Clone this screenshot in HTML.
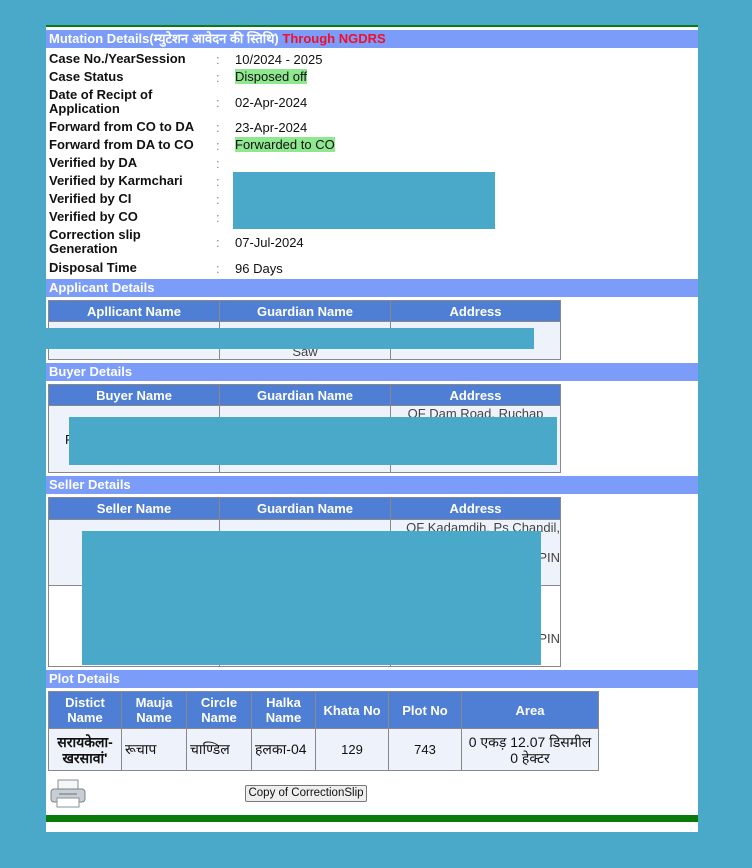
<!DOCTYPE html>
<html><head><meta charset="utf-8"><style>
body{margin:0;width:752px;height:868px;background:#4aa9c8;position:relative;overflow:hidden;font-family:"Liberation Sans","Noto Sans CJK SC",sans-serif;font-size:13px;color:#111}
.a{position:absolute}
.panel{left:46px;top:25px;width:652px;height:807px;background:#fff;border-top:2px solid #0a7a1a;box-sizing:border-box}
.hd{left:46px;width:652px;height:18px;background:#7b9cf9;color:#fff;font-weight:bold;font-size:13px;line-height:18px;padding-left:3px;box-sizing:border-box}
.lb{left:49px;font-weight:bold;font-size:13px;line-height:14px}
.co{left:216px;color:#888}
.va{left:235px;font-size:13px}
.gr{background:#8fe88f}
table{position:absolute;border-collapse:collapse;font-size:13px}
th{background:#4f7fd4;color:#fff;font-weight:bold;border:1px solid #888;text-align:center;padding:0}
td{border:1px solid #888;text-align:center;padding:0;background:#eef2fb}
.red{position:absolute;background:#4aa9c8}
.dv{font-size:14px}
</style></head><body>
<div class="a panel"></div>
<div class="a hd" style="top:30px">Mutation Details(म्युटेशन आवेदन की स्तिथि) <span style="color:#f0102a">Through NGDRS</span></div>
<div class="a lb" style="top:52px">Case No./YearSession</div><div class="a co" style="top:52px">:</div><div class="a va" style="top:52px">10/2024 - 2025</div>
<div class="a lb" style="top:70px">Case Status</div><div class="a co" style="top:70px">:</div><div class="a va gr" style="top:69px">Disposed off</div>
<div class="a lb" style="top:88px">Date of Recipt of<br>Application</div><div class="a co" style="top:95px">:</div><div class="a va" style="top:95px">02-Apr-2024</div>
<div class="a lb" style="top:120px">Forward from CO to DA</div><div class="a co" style="top:120px">:</div><div class="a va" style="top:120px">23-Apr-2024</div>
<div class="a lb" style="top:138px">Forward from DA to CO</div><div class="a co" style="top:138px">:</div><div class="a va gr" style="top:137px">Forwarded to CO</div>
<div class="a lb" style="top:156px">Verified by DA</div><div class="a co" style="top:156px">:</div>
<div class="a lb" style="top:174px">Verified by Karmchari</div><div class="a co" style="top:174px">:</div>
<div class="a lb" style="top:192px">Verified by CI</div><div class="a co" style="top:192px">:</div>
<div class="a lb" style="top:210px">Verified by CO</div><div class="a co" style="top:210px">:</div>
<div class="red" style="left:233px;top:172px;width:262px;height:57px"></div>
<div class="a lb" style="top:228px">Correction slip<br>Generation</div><div class="a co" style="top:235px">:</div><div class="a va" style="top:235px">07-Jul-2024</div>
<div class="a lb" style="top:261px">Disposal Time</div><div class="a co" style="top:261px">:</div><div class="a va" style="top:261px">96 Days</div>

<div class="a hd" style="top:279px">Applicant Details</div>
<table style="left:48px;top:300px;width:513px"><tr style="height:21px"><th style="width:170px">Apllicant Name</th><th style="width:170px">Guardian Name</th><th>Address</th></tr><tr style="height:38px"><td></td><td style="vertical-align:bottom;color:#444">Saw</td><td></td></tr></table>
<div class="red" style="left:46px;top:328px;width:488px;height:21px"></div>

<div class="a hd" style="top:363px">Buyer Details</div>
<table style="left:48px;top:384px;width:513px"><tr style="height:21px"><th style="width:170px">Buyer Name</th><th style="width:170px">Guardian Name</th><th>Address</th></tr><tr style="height:67px"><td style="text-align:left;padding-left:16px">F</td><td></td><td style="vertical-align:top;color:#444">OF Dam Road, Ruchap</td></tr></table>
<div class="red" style="left:69px;top:417px;width:488px;height:48px"></div>

<div class="a hd" style="top:476px">Seller Details</div>
<table style="left:48px;top:497px;width:513px"><tr style="height:22px"><th style="width:170px">Seller Name</th><th style="width:170px">Guardian Name</th><th>Address</th></tr><tr style="height:66px"><td></td><td></td><td style="vertical-align:top;text-align:right;color:#444">OF Kadamdih, Ps Chandil,<br><br>PIN</td></tr><tr style="height:81px"><td style="background:#fff"></td><td style="background:#fff"></td><td style="background:#fff;text-align:right;color:#444;padding-top:24px">PIN</td></tr></table>
<div class="red" style="left:82px;top:531px;width:459px;height:134px"></div>

<div class="a hd" style="top:670px">Plot Details</div>
<table style="left:48px;top:691px;width:551px"><tr style="height:37px"><th style="width:72px">Distict<br>Name</th><th style="width:64px">Mauja<br>Name</th><th style="width:64px">Circle<br>Name</th><th style="width:63px">Halka<br>Name</th><th style="width:72px">Khata No</th><th style="width:72px">Plot No</th><th>Area</th></tr>
<tr style="height:42px"><td class="dv" style="font-weight:bold;line-height:16px">सरायकेला-<br>खरसावां'</td><td class="dv" style="text-align:left;padding-left:3px">रूचाप</td><td class="dv" style="text-align:left;padding-left:3px">चाण्डिल</td><td class="dv" style="text-align:left;padding-left:3px">हलका-04</td><td>129</td><td>743</td><td class="dv" style="line-height:16px">0 एकड़ 12.07 डिसमील<br>0 हेक्टर</td></tr></table>

<svg class="a" style="left:49px;top:779px" width="38" height="30" viewBox="0 0 38 30"><rect x="9" y="1" width="20" height="10" fill="#f4f6f8" stroke="#8a9099"/><rect x="2" y="10" width="34" height="13" rx="3" fill="#c9ced4" stroke="#7b828a"/><rect x="8" y="19" width="22" height="9" fill="#fff" stroke="#8a9099"/><line x1="10" y1="15" x2="28" y2="15" stroke="#6d737a"/></svg>
<div class="a" style="left:245px;top:785px;width:122px;height:17px;background:#eee;border:1px solid #777;border-radius:2px;box-sizing:border-box;font-size:11.5px;line-height:15px;text-align:center">Copy of CorrectionSlip</div>
<div class="a" style="left:46px;top:815px;width:652px;height:7px;background:#0a7a0a"></div>
</body></html>
